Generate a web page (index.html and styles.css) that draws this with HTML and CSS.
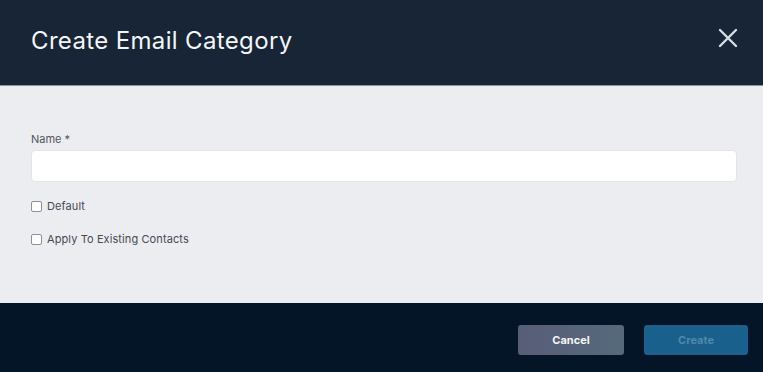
FILE: index.html
```html
<!DOCTYPE html>
<html lang="en">
<head>
  <meta charset="UTF-8">
  <title>Create Email Category</title>
  <link rel="stylesheet" href="styles.css">
</head>
<body>
  <div class="modal">
    <div class="modal-header">
      <h2>Create Email Category</h2>
      <button class="close-button" aria-label="Close">
        <svg width="20" height="20" viewBox="0 0 20 20"><path d="M2 2 L18 18 M18 2 L2 18" stroke="#d8dde3" stroke-width="2.4" stroke-linecap="round"/></svg>
      </button>
    </div>

    <div class="modal-body">
      <label class="field-label" for="name">Name *</label>
      <input id="name" class="text-input" type="text">

      <label class="check-row"><input type="checkbox"> Default</label>
      <label class="check-row"><input type="checkbox"> Apply To Existing Contacts</label>
    </div>

    <div class="modal-footer">
      <button class="btn btn-cancel">Cancel</button>
      <button class="btn btn-create" disabled>Create</button>
    </div>
  </div>
</body>
</html>
```

FILE: styles.css
```css
body {
  margin: 0;
  padding: 0;
  font-family: Inter, "Noto Sans", sans-serif;
  background-color: #ecedf1;
}
.modal {
  width: 763px;
  height: 372px;
  display: flex;
  flex-direction: column;
}
.modal-header {
  height: 86px;
  background-color: #172536;
  border-bottom: 1px solid #8a93a0;
  display: flex;
  align-items: center;
  justify-content: space-between;
  padding: 0 25px 0 31px;
  box-sizing: border-box;
  flex-shrink: 0;
}
.modal-header h2 {
  margin: 0;
  color: #f3f5f7;
  font-size: 24px;
  font-weight: 400;
  letter-spacing: 0.35px;
  margin-top: -5px;
}
.close-button {
  background: transparent;
  border: none;
  padding: 0;
  cursor: pointer;
  display: flex;
  margin-top: -10px;
}
.modal-body {
  flex: 1;
  background-color: #ecedf1;
  padding: 46px 26px 0 31px;
  box-sizing: border-box;
}
.field-label {
  display: block;
  font-size: 11px;
  color: #505560;
  margin-bottom: 4px;
}
.text-input {
  display: block;
  width: 100%;
  height: 32px;
  box-sizing: border-box;
  border: 1px solid #e2e4e8;
  border-radius: 4px;
  background: #fff;
  margin-bottom: 17px;
}
.check-row {
  display: flex;
  align-items: center;
  font-size: 11px;
  color: #454a55;
  margin-bottom: 19px;
  letter-spacing: 0.1px;
}
.check-row input {
  width: 11px;
  height: 11px;
  margin: 0 5px 0 0;
  appearance: none;
  border: 1px solid #8b8f99;
  border-radius: 2px;
  background: #fff;
}
.modal-footer {
  height: 69px;
  flex-shrink: 0;
  background-color: #031526;
  display: flex;
  justify-content: flex-end;
  align-items: flex-start;
  gap: 20px;
  padding: 22px 15px 0 0;
  box-sizing: border-box;
}
.btn {
  width: 106px;
  height: 30px;
  border: none;
  border-radius: 3px;
  font-family: Inter, "Noto Sans", sans-serif;
  font-size: 11px;
  font-weight: 700;
}
.btn-cancel {
  background: linear-gradient(90deg, #585d78, #56697b);
  color: #f3f4f6;
}
.btn-create {
  width: 104px;
  background-color: #19608d;
  color: #4f88aa;
}
```
